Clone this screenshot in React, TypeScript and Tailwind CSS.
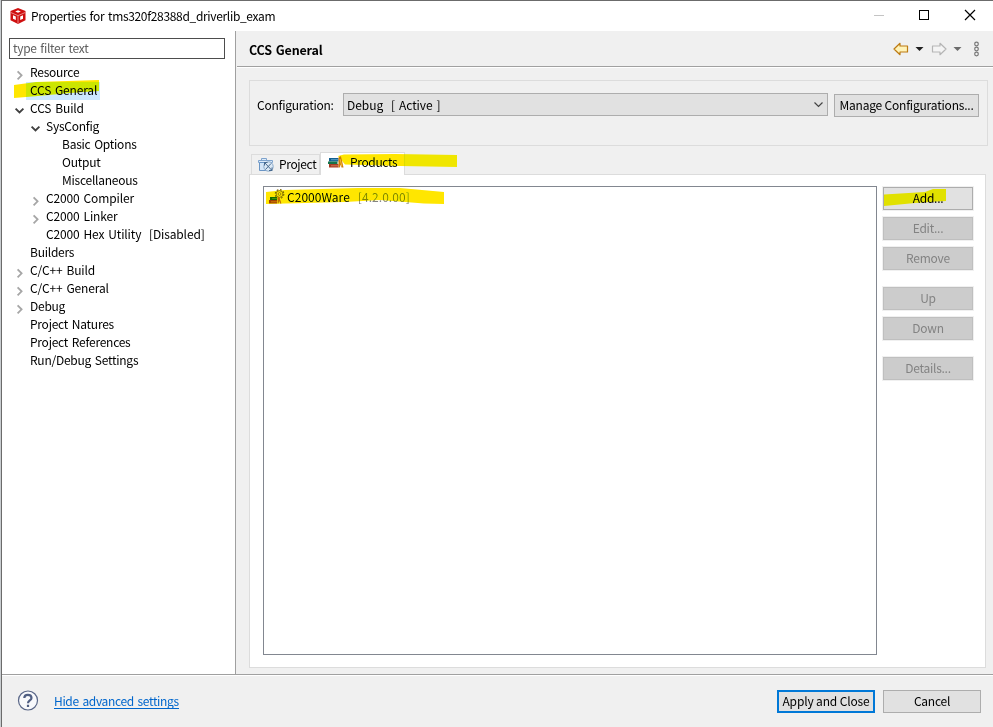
import type { ReactNode } from 'react'

type TreeItem = {
  label: string
  level: number
  state?: 'open' | 'closed'
  selected?: boolean
  loose?: boolean
}

const tree: TreeItem[] = [
  { label: 'Resource', level: 0, state: 'closed' },
  { label: 'CCS General', level: 0, selected: true },
  { label: 'CCS Build', level: 0, state: 'open', loose: true },
  { label: 'SysConfig', level: 1, state: 'open' },
  { label: 'Basic Options', level: 2 },
  { label: 'Output', level: 2 },
  { label: 'Miscellaneous', level: 2 },
  { label: 'C2000 Compiler', level: 1, state: 'closed', loose: true },
  { label: 'C2000 Linker', level: 1, state: 'closed', loose: true },
  { label: 'C2000 Hex Utility  [Disabled]', level: 1, loose: true },
  { label: 'Builders', level: 0 },
  { label: 'C/C++ Build', level: 0, state: 'closed', loose: true },
  { label: 'C/C++ General', level: 0, state: 'closed', loose: true },
  { label: 'Debug', level: 0, state: 'closed' },
  { label: 'Project Natures', level: 0 },
  { label: 'Project References', level: 0 },
  { label: 'Run/Debug Settings', level: 0 },
]

const indent = ['pl-3', 'pl-7', 'pl-11']

function Arrow({ state }: { state?: 'open' | 'closed' }) {
  return (
    <svg className="mt-[3px] h-3 w-3 shrink-0" viewBox="0 0 12 12" fill="none">
      {state === 'open' && <path d="M1.6 3.6 5.5 7.4 9.4 3.6" stroke="#404040" strokeWidth="1.9" />}
      {state === 'closed' && <path d="M3.6 2.3 7.6 6.3 3.6 10.3" stroke="#a6a6a6" strokeWidth="1.8" />}
    </svg>
  )
}

function CubeIcon() {
  return (
    <svg className="h-4 w-4 shrink-0" viewBox="0 0 16 16">
      <path d="M8 0 15.5 3V12.3L8 16 0.5 12.3V3Z" fill="#cf1010" />
      <path d="M1 4.6 8 7.6 15 4.6M8 7.6V15.5" stroke="#f3b9b9" strokeWidth="0.7" fill="none" />
      <path d="M8 2.2 10.8 3.5 8 4.8 5.2 3.5Z" fill="#fff" />
      <path d="M3 7.3 5.8 8.6V12L3 10.7ZM10.2 8.6 13 7.3V10.7L10.2 12Z" fill="#fff" />
    </svg>
  )
}

function ProjectIcon() {
  return (
    <svg className="h-4 w-4 shrink-0" viewBox="0 0 16 16" fill="none">
      <path d="M0.5 3.5H14.5V5.5H0.5ZM3.5 3.5V1.5H8.5V3.5" fill="#dcebfa" stroke="#7fa3cc" />
      <path d="M1.5 5.5V13.5H9V5.5Z" fill="#d3e5f8" stroke="#6a95c5" />
      <circle cx="10.5" cy="9.5" r="4.7" fill="#dbe8f5" stroke="#8aaacb" />
      <path d="M6.5 5.5 14 13.5M13 6.5 7.5 12.5M6.5 5.5H9.5M6.5 5.5V8.5M14 10.5V13.5H11" stroke="#46698f" />
    </svg>
  )
}

function BooksIcon() {
  return (
    <svg className="h-4 w-4 shrink-0" viewBox="0 0 16 16">
      <path d="M1 3H10.5V6.5H1Z" fill="#14608f" />
      <path d="M3 4.7H10.5" stroke="#6fb0d4" strokeWidth="0.8" />
      <path d="M0 6.5H9.5V9H0Z" fill="#16744a" />
      <path d="M1 9H10.5V12.5H1Z" fill="#a83b24" />
      <path d="M3 10.8H10.5" stroke="#d98a62" strokeWidth="0.8" />
      <path d="M10.5 2.5 13 1 15.5 12.5H13.5L12.8 9.5 11.8 12.5H10.5Z" fill="#d07c0b" />
      <path d="M12 4 13.8 11" stroke="#ffca3a" strokeWidth="0.8" />
    </svg>
  )
}

function WareIcon() {
  return (
    <svg className="h-4 w-4 shrink-0" viewBox="0 0 16 16" fill="none">
      <circle cx="10.5" cy="5" r="4.3" stroke="#81690e" strokeWidth="1.3" strokeDasharray="1.7 1.68" />
      <circle cx="10.5" cy="5" r="3.4" fill="#ffe83c" stroke="#81690e" strokeWidth="0.9" />
      <circle cx="10.5" cy="5" r="1.4" fill="#fff3a0" stroke="#81690e" strokeWidth="0.8" />
      <path d="M1 8H8V11H1Z" fill="#146c3c" />
      <path d="M3 9.5H8" stroke="#5c9a3c" strokeWidth="0.8" />
      <path d="M0 11H8V14.5H0Z" fill="#a34119" />
      <path d="M2 12.8H8" stroke="#d98f4b" strokeWidth="0.8" />
      <path d="M8.5 8.5 10.3 7.8 12.5 14.5H11L10.3 12 9.5 14.5H8.5Z" fill="#bf7000" />
    </svg>
  )
}

function SideButton({ children, enabled, gap }: { children: ReactNode; enabled?: boolean; gap?: boolean }) {
  return (
    <div className={`h-[25px] w-[92px] bg-[#f0f0f0] p-px ${gap ? 'mt-[15px]' : 'mt-[5px] first:mt-0'}`}>
      <button
        disabled={!enabled}
        className={`flex h-[23px] w-[90px] items-center justify-center border pb-[2px] ${
          enabled ? 'border-[#adadad] bg-[#e1e1e1]' : 'border-[#bfbfbf] bg-[#ccc] text-[#838383]'
        }`}
      >
        {children}
      </button>
    </div>
  )
}

// Marker strokes drawn over the window
function Highlights() {
  return (
    <svg className="pointer-events-none absolute inset-0 z-20 mix-blend-darken" width="993" height="727" fill="#ffe600">
      <path d="M14 85 36 82 99 80V91L70 93 38 96 14 98Z" />
      <path d="M338 156 344 154.5 395 154 457 155V167L400 166 345 164.5Z" />
      <path d="M266 192 285 190 358 188H400L444 192V204L424 203.5 380 200 345 202 266 204Z" />
      <path d="M884 194.5 925 192 933 189 946 189V201L915 203 884 206Z" />
    </svg>
  )
}

export default function App() {
  return (
    <div className="relative isolate flex h-[727px] w-[993px] overflow-hidden whitespace-nowrap bg-[#c9cdd0] pl-px font-['Noto_Sans_CJK_KR','Noto_Sans',sans-serif] text-[12px] leading-[18px] tracking-[-0.25px] text-black [word-spacing:1.3px]">
      <div className="flex min-w-0 flex-1 flex-col border-l border-t border-[#6b6b6b] bg-[#f0f0f0]">
        <header className="flex h-[30px] shrink-0 items-center bg-white pl-2">
          <CubeIcon />
          <span className="-mt-px ml-[5px] tracking-[-0.33px]">Properties for tms320f28388d_driverlib_exam</span>
          <svg className="ml-auto" width="128" height="30" fill="none" shapeRendering="crispEdges">
            <path d="M9 14.5H19" stroke="#c4c4c4" />
            <rect x="54.5" y="9.5" width="9" height="9" stroke="#000" />
            <path d="M100 9 110 19M110 9 100 19" stroke="#000" strokeWidth="1.2" shapeRendering="auto" />
          </svg>
        </header>

        <main className="flex h-[643px] shrink-0">
          <aside className="w-[234px] shrink-0 border-r border-[#a0a0a0] bg-white pt-[7px]">
            <div className="ml-[7px] flex h-[21px] w-[216px] items-center border border-[#4d4d4d] pb-[2px] pl-[3px] tracking-[-0.3px] text-[#606060]">
              type filter text
            </div>
            <ul className="mt-[5px]">
              {tree.map(item => (
                <li key={item.label} className={`flex h-[18px] items-center ${indent[item.level]}`}>
                  <Arrow state={item.state} />
                  <span
                    className={`h-[18px] whitespace-pre pl-1 pr-[3px] leading-4 ${item.selected ? 'bg-[#cce8ff] tracking-[-0.18px]' : ''} ${
                      item.loose ? 'tracking-[-0.13px]' : ''
                    }`}
                  >
                    {item.label}
                  </span>
                </li>
              ))}
            </ul>
          </aside>

          <section className="ml-px flex min-w-0 flex-1 flex-col">
            <div className="flex h-9 shrink-0 items-center border-b border-[#a0a0a0] pl-3">
              <h1 className="mt-[3px] text-[12.5px] font-bold tracking-[-0.17px]">CCS General</h1>
              <svg className="ml-auto" width="104" height="35" fill="none">
                <path
                  d="M5 18 11 12.3V15H18.5V21H11V23.7Z"
                  fill="#fff3b8"
                  stroke="#bd7b13"
                  strokeWidth="1.2"
                  strokeLinejoin="round"
                />
                <path d="M26.5 16H34.5L30.5 20Z" fill="#202020" />
                <path
                  d="M57 18 51 12.3V15H43.5V21H51V23.7Z"
                  fill="#f4f4f4"
                  stroke="#b5b5b5"
                  strokeWidth="1.2"
                  strokeLinejoin="round"
                />
                <path d="M64.5 16H72.5L68.5 20Z" fill="#6c6c6c" />
                <g stroke="#777" strokeWidth="1.2">
                  <circle cx="87.5" cy="13" r="1.8" />
                  <circle cx="87.5" cy="18" r="1.8" />
                  <circle cx="87.5" cy="23" r="1.8" />
                </g>
              </svg>
            </div>
            <div className="h-px shrink-0 bg-white" />

            <div className="ml-3 mt-3 flex h-[66px] w-[739px] shrink-0 border border-[#dcdcdc] pl-[7px] pt-3">
              <span className="mt-[3px] w-[86px]">Configuration:</span>
              <div className="flex h-[23px] w-[485px] items-center justify-between border border-[#adadad] bg-[#e1e1e1] pl-[3px] pr-1">
                <span className="whitespace-pre tracking-[-0.05px]">Debug  [ Active ]</span>
                <svg width="9" height="6" fill="none">
                  <path d="M0.5 0.5 4.5 4.5 8.5 0.5" stroke="#444" strokeWidth="1.2" />
                </svg>
              </div>
              <button className="ml-[6px] mt-px flex h-[23px] w-[145px] items-center justify-center border border-[#adadad] bg-[#e1e1e1] pb-[2px] tracking-[-0.2px]">
                Manage Configurations...
              </button>
            </div>

            <div className="ml-[14px] mt-[6px] flex h-[22px] shrink-0 items-end">
              <div className="flex h-5 w-[69px] items-center border border-b-0 border-[#dcdcdc] pl-[6px]">
                <ProjectIcon />
                <span className="-mt-[2px] ml-[5px] tracking-[-0.35px]">Project</span>
              </div>
              <div className="z-10 -mb-px flex h-[23px] w-[85px] items-center border border-b-0 border-[#dcdcdc] bg-white pb-[3px] pl-[7px]">
                <BooksIcon />
                <span className="-mt-[2px] ml-[6px] tracking-[-0.35px]">Products</span>
              </div>
            </div>
            <div className="ml-3 flex h-[494px] w-[737px] shrink-0 border border-[#dcdcdc] bg-white pl-[13px] pt-[11px]">
              <div className="h-[469px] w-[614px] border border-[#828790] pl-[5px] pt-px">
                <div className="flex h-[18px] items-center">
                  <WareIcon />
                  <span className="ml-[2px] tracking-[0.03px]">C2000Ware</span>
                  <span className="ml-2 tracking-[0.05px] text-[#838383]">[4.2.0.00]</span>
                </div>
              </div>
              <div className="ml-[5px] flex flex-col">
                <SideButton enabled>Add...</SideButton>
                <SideButton>Edit...</SideButton>
                <SideButton>Remove</SideButton>
                <SideButton gap>Up</SideButton>
                <SideButton>Down</SideButton>
                <SideButton gap>Details...</SideButton>
              </div>
            </div>
          </section>
        </main>

        <footer className="flex flex-1 border-t border-[#a0a0a0] pl-[15px] pr-3 pt-[15px] shadow-[inset_0_1px_0_#fff]">
          <svg width="22" height="22" fill="none">
            <circle cx="11" cy="10.5" r="9.5" fill="#f8f9fc" stroke="#5a6788" strokeWidth="1.2" />
            <path d="M7.3 8C7.3 3.8 14.5 3.8 14.5 8 14.5 10.5 11 10.5 11 13.2M11 14.8V17" stroke="#505f83" strokeWidth="2.2" />
          </svg>
          <a className="ml-[15px] mt-[2px] h-[17px] border-b border-[#0066cc] tracking-[-0.34px] text-[#0066cc]">
            Hide advanced settings
          </a>
          <button className="ml-auto flex h-[23px] w-[98px] items-center justify-center border-2 border-[#0078d7] bg-[#e1e1e1] pb-[2px] tracking-[-0.15px]">
            Apply and Close
          </button>
          <button className="ml-2 flex h-[23px] w-[98px] items-center justify-center border border-[#adadad] bg-[#e1e1e1] pb-[2px]">
            Cancel
          </button>
        </footer>
      </div>
      <Highlights />
    </div>
  )
}
